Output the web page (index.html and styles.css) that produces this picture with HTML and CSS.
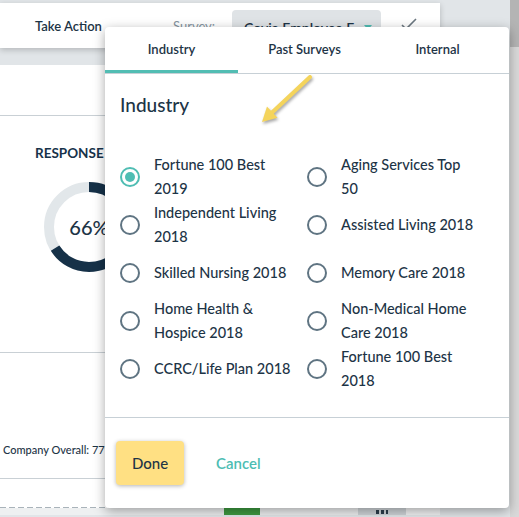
FILE: index.html
```html
<!DOCTYPE html>
<html lang="en">
<head>
<meta charset="utf-8">
<title>Survey benchmark</title>
<link rel="stylesheet" href="styles.css">
</head>
<body>
<div class="app">
  <div class="main">
    <header class="topbar">
      <span class="take-action">Take Action</span>
      <span class="survey-label">Survey:</span>
      <div class="survey-select"><span>Covia Employee E</span><span class="caret"></span></div>
      <svg class="check" width="18" height="14" viewBox="0 0 18 14"><path d="M2 8 L6 12 L16 2" fill="none" stroke="#6b7780" stroke-width="1.6"/></svg>
    </header>
    <section class="card">
      <div class="card-top"></div>
      <div class="card-response">
        <h3 class="card-title">RESPONSE RATE</h3>
        <div class="donut">
          <svg width="90" height="90" viewBox="0 0 90 90">
            <circle cx="45" cy="45" r="40" fill="none" stroke="#e2e7ea" stroke-width="10"/>
            <circle cx="45" cy="45" r="40" fill="none" stroke="#163148" stroke-width="10" stroke-dasharray="165.9 251.3" transform="rotate(-90 45 45)"/>
          </svg>
          <span class="donut-value">66%</span>
        </div>
      </div>
      <div class="card-company">Company Overall: 77%</div>
      <div class="card-foot"></div>
      <div class="dashed"></div>
    </section>
    <div class="bottom-row">
      <div class="bar-green"></div>
      <div class="bar-grey"><span class="dots"></span></div>
      <div class="bar-light"></div>
    </div>
  </div>
  <div class="scrollbar"><div class="thumb"></div></div>

  <div class="modal">
    <nav class="tabs">
      <div class="tab active">Industry</div>
      <div class="tab">Past Surveys</div>
      <div class="tab">Internal</div>
    </nav>
    <div class="modal-body">
      <h2 class="panel-title">Industry</h2>
      <div class="options">
        <label class="option"><span class="radio checked"></span><span class="label">Fortune 100 Best 2019</span></label>
        <label class="option"><span class="radio"></span><span class="label">Aging Services Top 50</span></label>
        <label class="option"><span class="radio"></span><span class="label">Independent Living 2018</span></label>
        <label class="option"><span class="radio"></span><span class="label">Assisted Living 2018</span></label>
        <label class="option"><span class="radio"></span><span class="label">Skilled Nursing 2018</span></label>
        <label class="option"><span class="radio"></span><span class="label">Memory Care 2018</span></label>
        <label class="option"><span class="radio"></span><span class="label">Home Health &amp; Hospice 2018</span></label>
        <label class="option"><span class="radio"></span><span class="label">Non-Medical Home Care 2018</span></label>
        <label class="option"><span class="radio"></span><span class="label">CCRC/Life Plan 2018</span></label>
        <label class="option"><span class="radio"></span><span class="label">Fortune 100 Best 2018</span></label>
      </div>
    </div>
    <footer class="modal-footer">
      <button class="btn-done">Done</button>
      <button class="btn-cancel">Cancel</button>
    </footer>
  </div>

  <svg class="arrow" width="70" height="60" viewBox="250 70 70 60">
    <line x1="310" y1="77" x2="271" y2="113.5" stroke="#f4d45c" stroke-width="4" stroke-linecap="round"/>
    <polygon points="262,122 277.5,117.8 267,106.6" fill="#f4d45c"/>
  </svg>
</div>
</body>
</html>
```
FILE: styles.css
```css
body {
  margin: 0;
  width: 519px;
  height: 517px;
  overflow: hidden;
  font-family: Lato, "Open Sans", sans-serif;
  color: #1d3446;
}

.app {
  position: relative;
  display: flex;
  height: 517px;
  background: #e1e5e8;
}

.main {
  width: 510px;
  display: flex;
  flex-direction: column;
}

.scrollbar {
  width: 9px;
  background: #d9d9d9;
}

.thumb {
  height: 47px;
  background: #b4b4b4;
}

/* header */
.topbar {
  margin-top: 3px;
  height: 45px;
  width: 440px;
  box-sizing: border-box;
  padding-left: 35px;
  background: #fff;
  box-shadow: 0 2px 6px rgba(0, 0, 0, 0.2);
  display: flex;
  align-items: center;
  position: relative;
  z-index: 1;
}

.take-action {
  width: 138px;
  font-size: 13px;
  font-weight: 600;
}

.survey-label {
  width: 59px;
  font-size: 13px;
  color: #8594a0;
}

.survey-select {
  align-self: flex-start;
  margin-top: 7px;
  width: 149px;
  height: 34px;
  box-sizing: border-box;
  padding: 0 9px 0 12px;
  background: #dfe3e6;
  border-radius: 4px;
  display: flex;
  align-items: center;
  justify-content: space-between;
  font-size: 14px;
  font-weight: 600;
}

.caret {
  width: 0;
  height: 0;
  border-left: 4px solid transparent;
  border-right: 4px solid transparent;
  border-top: 5px solid #4fbdb3;
}

.check {
  margin-left: 19px;
  margin-top: -4px;
}

/* background card */
.card {
  margin-top: 17px;
  width: 440px;
  background: #fff;
}

.card-top {
  height: 50px;
  border-bottom: 1px solid #c9d0d5;
}

.card-response {
  height: 237px;
  box-sizing: border-box;
  padding: 30px 0 0 35px;
  border-bottom: 1px solid #c9d0d5;
}

.card-title {
  margin: 0;
  font-size: 13.5px;
  line-height: 14px;
  font-weight: 700;
  color: #17324a;
}

.donut {
  position: relative;
  margin: 22px 0 0 9px;
  width: 90px;
  height: 90px;
}

.donut svg {
  display: block;
}

.donut-value {
  position: absolute;
  inset: 0;
  display: flex;
  align-items: center;
  justify-content: center;
  font-size: 20px;
  font-weight: 500;
}

.card-company {
  height: 126px;
  box-sizing: border-box;
  padding: 90px 0 0 3px;
  font-size: 11px;
  line-height: 14px;
  font-weight: 500;
  border-bottom: 1px solid #c9d0d5;
}

.card-foot {
  height: 28px;
}

.dashed {
  height: 1px;
  background: repeating-linear-gradient(to right, #a9b3ba 0 6px, transparent 6px 9px);
}

.bottom-row {
  width: 440px;
  height: 7px;
  background: #eef0f1;
  display: flex;
}

.bar-green {
  margin-left: 224px;
  width: 36px;
  height: 12px;
  margin-top: -5px;
  background: #3d9a40;
}

.bar-grey {
  margin-left: 98px;
  width: 48px;
  background: #cfd4d8;
  display: flex;
  justify-content: center;
}

.dots {
  width: 12px;
  height: 4px;
  margin-top: 2px;
  background: repeating-linear-gradient(to right, #2d3e4c 0 3px, transparent 3px 5px);
}

.bar-light {
  width: 34px;
  background: #f1f2f3;
}

/* modal */
.modal {
  position: absolute;
  left: 105px;
  top: 27px;
  width: 404px;
  height: 481px;
  background: #fff;
  border-radius: 4px;
  box-shadow: 0 3px 12px rgba(0, 0, 0, 0.35);
  display: flex;
  flex-direction: column;
  z-index: 5;
}

.tabs {
  display: grid;
  grid-template-columns: repeat(3, 133px);
  height: 47px;
  box-sizing: border-box;
  border-bottom: 1px solid #c7d0d6;
}

.tab {
  display: flex;
  align-items: center;
  justify-content: center;
  font-size: 13px;
  font-weight: 600;
  border-bottom: 3px solid transparent;
}

.tab.active {
  border-bottom-color: #52bdb3;
}

.modal-body {
  flex: 1;
}

.panel-title {
  margin: 19px 0 0 15px;
  font-size: 19px;
  line-height: 24px;
  font-weight: 500;
}

.options {
  margin-top: 36px;
  padding-left: 15px;
  display: grid;
  grid-template-columns: 187px 187px;
  grid-auto-rows: 48px;
}

.option {
  display: flex;
  align-items: center;
  gap: 14px;
}

.radio {
  flex: none;
  width: 20px;
  height: 20px;
  box-sizing: border-box;
  border: 2px solid #5f7482;
  border-radius: 50%;
  display: grid;
  place-items: center;
}

.radio.checked {
  border-color: #4fbdb3;
}

.radio.checked::after {
  content: "";
  width: 10px;
  height: 10px;
  border-radius: 50%;
  background: #4fbdb3;
}

.label {
  width: 138px;
  font-size: 14.5px;
  line-height: 24px;
  font-weight: 500;
}

.modal-footer {
  height: 91px;
  box-sizing: border-box;
  border-top: 1px solid #c7d0d6;
  padding: 0 11px;
  display: flex;
  align-items: center;
}

.btn-done {
  width: 68px;
  height: 44px;
  border: none;
  border-radius: 4px;
  background: #ffe083;
  box-shadow: 0 1px 4px rgba(0, 0, 0, 0.3);
  font-family: inherit;
  font-size: 15px;
  font-weight: 500;
  color: #1d3446;
  padding: 0;
}

.btn-cancel {
  margin-left: 32px;
  border: none;
  background: none;
  padding: 0;
  font-family: inherit;
  font-size: 15px;
  font-weight: 600;
  color: #4dbdb3;
}

.arrow {
  position: absolute;
  left: 250px;
  top: 70px;
  z-index: 6;
  filter: drop-shadow(1px 2px 1.5px rgba(0, 0, 0, 0.35));
}
```
